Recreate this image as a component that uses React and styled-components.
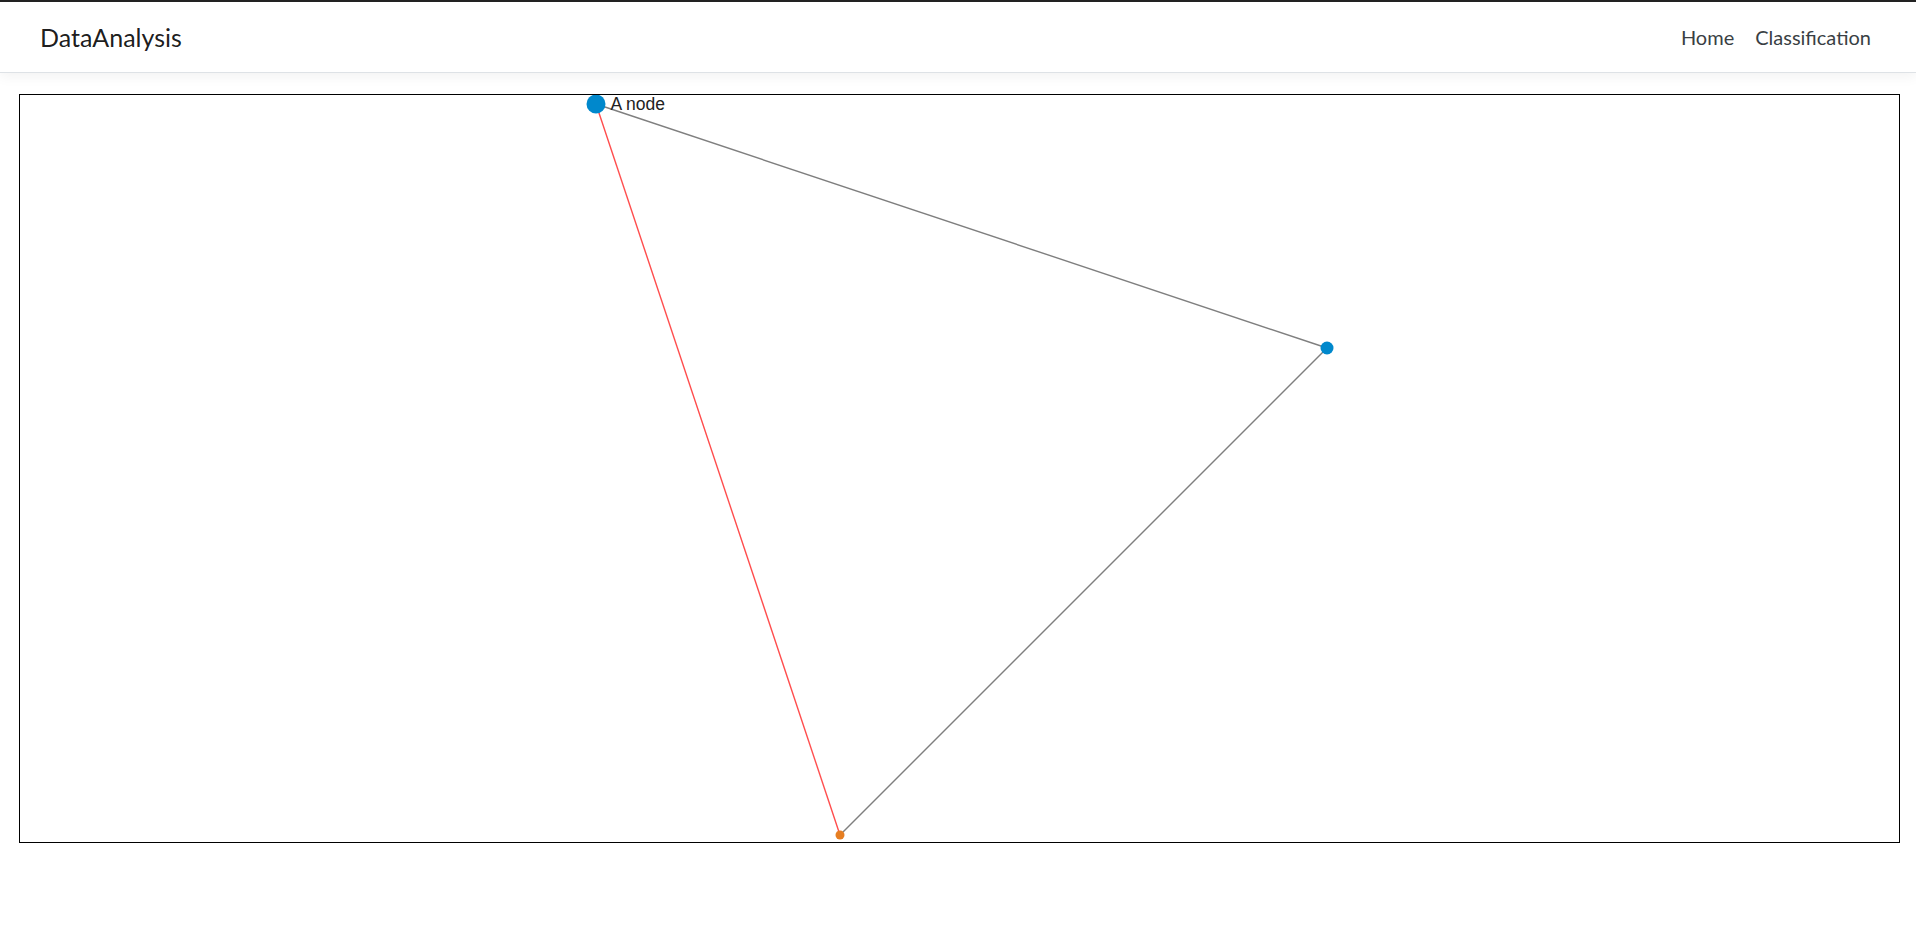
import React from 'react';
import styled, { createGlobalStyle } from 'styled-components';

const nodes = [
  { id: 'a', x: 576, y: 9, r: 9.5, color: '#0088cc', label: 'A node' },
  { id: 'b', x: 1307, y: 253, r: 6.5, color: '#0088cc' },
  { id: 'c', x: 820, y: 740, r: 4.5, color: '#e67e22' },
];

const edges = [
  { from: 'a', to: 'b', color: '#7f7f7f' },
  { from: 'b', to: 'c', color: '#7f7f7f' },
  { from: 'a', to: 'c', color: '#ff4d4d' },
];

const byId = Object.fromEntries(nodes.map((n) => [n.id, n]));

const App = () => {
  return (
    <>
      <GlobalStyle />
      <Header>
        <Brand href="#">DataAnalysis</Brand>
        <NavList>
          <NavLink href="#">Home</NavLink>
          <NavLink href="#">Classification</NavLink>
        </NavList>
      </Header>
      <Main>
        <GraphBox>
          <svg width="100%" height="100%" viewBox="0 0 1879 747">
            {edges.map((e) => {
              const s = byId[e.from];
              const t = byId[e.to];
              return (
                <line
                  key={e.from + e.to}
                  x1={s.x}
                  y1={s.y}
                  x2={t.x}
                  y2={t.y}
                  stroke={e.color}
                  strokeWidth="1.4"
                />
              );
            })}
            {nodes.map((n) => (
              <g key={n.id}>
                <circle cx={n.x} cy={n.y} r={n.r} fill={n.color} />
                {n.label && (
                  <NodeLabel x={n.x + n.r + 5} y={n.y + 6}>
                    {n.label}
                  </NodeLabel>
                )}
              </g>
            ))}
          </svg>
        </GraphBox>
      </Main>
    </>
  );
};

// Styled Components
const GlobalStyle = createGlobalStyle`
  body {
    margin: 0;
    background: #fff;
    font-family: "Segoe UI", Lato, "Open Sans", sans-serif;
    color: #212529;
  }
`;

const Header = styled.header`
  display: flex;
  align-items: center;
  justify-content: space-between;
  height: 70px;
  padding: 0 45px 0 40px;
  border-top: 2px solid #222;
  border-bottom: 1px solid #dee2e6;
  background: #fff;
  box-shadow: 0 4px 12px rgba(0, 0, 0, 0.05);
`;

const Brand = styled.a`
  font-size: 25px;
  color: rgba(0, 0, 0, 0.9);
  text-decoration: none;
`;

const NavList = styled.nav`
  display: flex;
  gap: 21px;
`;

const NavLink = styled.a`
  font-size: 20px;
  color: #3a3f44;
  text-decoration: none;
`;

const Main = styled.main`
  padding: 21px 16px 0 19px;
`;

const GraphBox = styled.div`
  box-sizing: border-box;
  height: 749px;
  border: 1px solid #000;

  svg {
    display: block;
  }
`;

const NodeLabel = styled.text`
  font-family: "Liberation Sans", Arial, sans-serif;
  font-size: 17.5px;
  fill: #222;
`;

export default App;
